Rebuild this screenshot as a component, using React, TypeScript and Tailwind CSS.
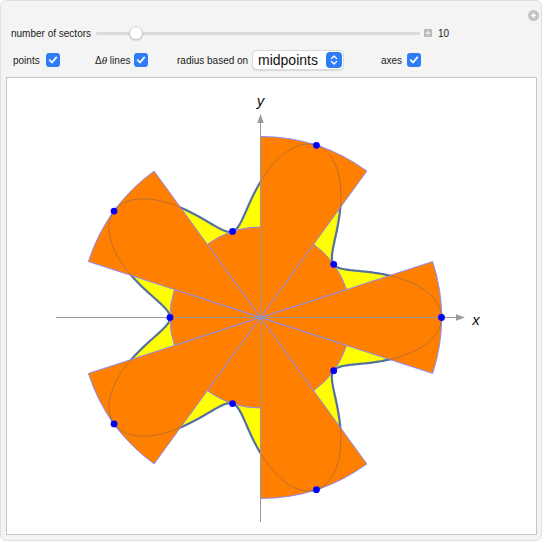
import React from 'react';

// polar plot geometry (page coordinates)
const S = 45.25;
const CX = 260.5;
const CY = 317.5;
const N = 10;

const pt = (th: number, r: number): [number, number] => [CX + S * r * Math.cos(th), CY - S * r * Math.sin(th)];
const rr = (th: number) => 3 + Math.cos(5 * th);

const curvePath = (() => {
  const parts: string[] = [];
  for (let i = 0; i <= 720; i++) {
    const th = (2 * Math.PI * i) / 720;
    const [x, y] = pt(th, rr(th));
    parts.push(`${i === 0 ? 'M' : 'L'}${x.toFixed(2)},${y.toFixed(2)}`);
  }
  return parts.join(' ') + ' Z';
})();

const sectors = Array.from({ length: N }, (_, k) => {
  const c = (2 * Math.PI * k) / N;
  const a1 = c - Math.PI / N;
  const a2 = c + Math.PI / N;
  const r = rr(c);
  const [x1, y1] = pt(a1, r);
  const [x2, y2] = pt(a2, r);
  const R = S * r;
  return {
    d: `M${CX},${CY} L${x1.toFixed(2)},${y1.toFixed(2)} A${R.toFixed(2)},${R.toFixed(2)} 0 0 0 ${x2.toFixed(2)},${y2.toFixed(2)} Z`,
    dot: pt(c, r),
  };
});

const Checkbox = () => (
  <span className="w-[14px] h-[14px] rounded-[3px] bg-[#2f7df6] flex items-center justify-center shrink-0">
    <svg width="10" height="10" viewBox="0 0 10 10">
      <path d="M1.8 5.2 L4 7.5 L8.3 2.4" fill="none" stroke="white" strokeWidth="1.8" strokeLinecap="round" strokeLinejoin="round" />
    </svg>
  </span>
);

const PlusSquare = () => (
  <span className="w-[8px] h-[8px] rounded-[1px] bg-[#b9b9b9] flex items-center justify-center">
    <svg width="6" height="6" viewBox="0 0 6 6">
      <path d="M3 0.5 V5.5 M0.5 3 H5.5" stroke="#ececec" strokeWidth="1.3" />
    </svg>
  </span>
);

const Plot = () => (
  <svg width="529" height="456" viewBox="7 78 529 456" className="block">
    {/* area under the curve */}
    <path d={curvePath} fill="#ffff00" stroke="none" />
    <path d={curvePath} fill="none" stroke="#5277ad" strokeWidth="2.2" />

    {/* sectors */}
    {sectors.map((s, i) => (
      <path key={i} d={s.d} fill="#ff7f00" stroke="#8a8cff" strokeWidth="1" strokeLinejoin="round" />
    ))}

    {/* curve showing faintly through sectors */}
    <path d={curvePath} fill="none" stroke="#6b5a70" strokeOpacity="0.5" strokeWidth="0.9" />

    {/* axes */}
    <g stroke="#9a9a9a" strokeWidth="1">
      <line x1="56" y1={CY} x2="458" y2={CY} />
      <line x1={CX} y1="522" x2={CX} y2="121" />
    </g>
    <path d={`M465,${CY} L456,${CY - 3.2} L456,${CY + 3.2} Z`} fill="#9a9a9a" />
    <path d={`M${CX},114 L${CX - 3.2},123 L${CX + 3.2},123 Z`} fill="#9a9a9a" />
    <text x="476" y="325" textAnchor="middle" fontFamily="'Liberation Sans', Arial, sans-serif" fontStyle="italic" fontSize="15" fill="#111">x</text>
    <text x={CX} y="106" textAnchor="middle" fontFamily="'Liberation Sans', Arial, sans-serif" fontStyle="italic" fontSize="15" fill="#111">y</text>

    {/* points */}
    {sectors.map((s, i) => (
      <circle key={i} cx={s.dot[0]} cy={s.dot[1]} r="3.4" fill="#0000ff" />
    ))}
  </svg>
);

export default function App() {
  return (
    <div className="w-[544px] h-[543px] bg-white" style={{ fontFamily: "'Liberation Sans', Arial, sans-serif" }}>
      <div className="relative w-[542px] h-[541px] rounded-[6px] border border-[#e0e0e0] bg-[#f4f4f4] flex flex-col">
        {/* top-right options button */}
        <span className="absolute left-[527px] top-[9px] w-[11px] h-[11px] rounded-full bg-[#c3c3c3] flex items-center justify-center">
          <svg width="7" height="7" viewBox="0 0 7 7">
            <path d="M3.5 1 V6 M1 3.5 H6" stroke="white" strokeWidth="1.4" />
          </svg>
        </span>

        {/* number of sectors slider */}
        <div className="flex items-center h-[16px] mt-[24px] ml-[10px] text-[10px] text-[#222]">
          <span className="w-[85px]">number of sectors</span>
          <div className="relative w-[324px] h-[16px] flex items-center">
            <div className="w-full h-[3px] rounded-full bg-[#dadada]" />
            <span className="absolute left-[33px] top-[1px] w-[14px] h-[14px] rounded-full bg-white border border-[#cfcfcf] shadow-[0_1px_1px_rgba(0,0,0,0.15)]" />
          </div>
          <span className="ml-[4px]">
            <PlusSquare />
          </span>
          <span className="ml-[6px]">10</span>
        </div>

        {/* checkboxes and popup */}
        <div className="flex items-center h-[20px] mt-[9px] ml-[12px] text-[10px] text-[#222]">
          <span className="w-[33px]">points</span>
          <Checkbox />
          <span className="ml-[35px] w-[39px]">
            Δ<i style={{ fontFamily: "'Liberation Serif', serif" }} className="text-[11px]">θ</i> lines
          </span>
          <Checkbox />
          <span className="ml-[29px] w-[75px]">radius based on</span>
          <div className="w-[92px] h-[20px] rounded-[5px] bg-white border border-[#dcdcdc] shadow-[0_0.5px_1px_rgba(0,0,0,0.12)] flex items-center justify-between pl-[5px] pr-[1px]">
            <span className="text-[14px] text-[#111]">midpoints</span>
            <span className="w-[16px] h-[16px] rounded-[4px] bg-[#2f7df6] flex items-center justify-center">
              <svg width="8" height="12" viewBox="0 0 8 12">
                <path d="M1.5 4.5 L4 2 L6.5 4.5 M1.5 7.5 L4 10 L6.5 7.5" fill="none" stroke="white" strokeWidth="1.4" strokeLinecap="round" strokeLinejoin="round" />
              </svg>
            </span>
          </div>
          <span className="ml-[37px] w-[26px]">axes</span>
          <Checkbox />
        </div>

        {/* plot frame */}
        <div className="mt-[7px] ml-[5px] w-[531px] h-[458px] border border-[#c6c6c6] bg-white">
          <Plot />
        </div>
      </div>
    </div>
  );
}
